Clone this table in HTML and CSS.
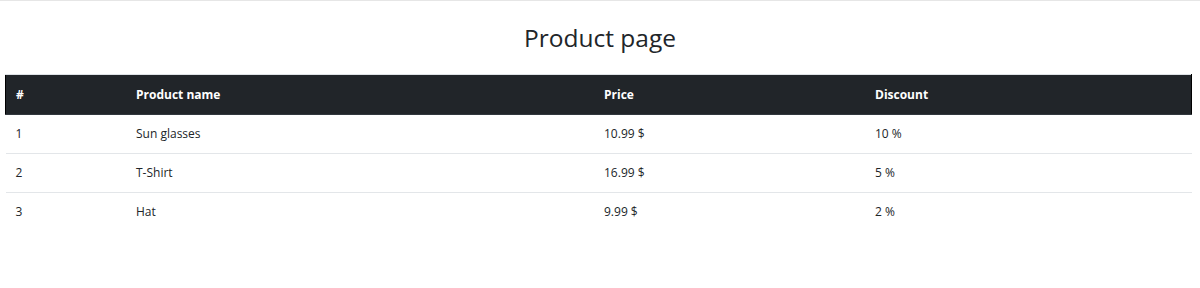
FILE: index.html
```html
<!DOCTYPE html>
<html lang="en">
  <head>
    <meta charset="UTF-8" />
    <title>Product page</title>
    <link rel="stylesheet" href="styles.css">
  </head>
  <body>
    <h1 class="title">Product page</h1>
    <table class="products">
      <thead>
        <tr>
          <th class="col-id">#</th>
          <th class="col-name">Product name</th>
          <th class="col-price">Price</th>
          <th>Discount</th>
        </tr>
      </thead>
      <tbody>
        <tr>
          <td>1</td>
          <td>Sun glasses</td>
          <td>10.99 $</td>
          <td>10 %</td>
        </tr>
        <tr>
          <td>2</td>
          <td>T-Shirt</td>
          <td>16.99 $</td>
          <td>5 %</td>
        </tr>
        <tr>
          <td>3</td>
          <td>Hat</td>
          <td>9.99 $</td>
          <td>2 %</td>
        </tr>
      </tbody>
    </table>
  </body>
</html>
```

FILE: styles.css
```css
html,
body {
  margin: 0;
  padding: 0;
  font-family: "Open Sans", "Noto Sans", sans-serif;
  color: #212529;
  background-color: #ffffff;
}
body {
  border-top: 1px solid #e6e6e6;
}
.title {
  font-size: 24.5px;
  font-weight: 400;
  line-height: 31px;
  text-align: center;
  margin: 21px 0 21px 0;
}
.products {
  width: calc(100% - 13px);
  margin-left: 5px;
  border-collapse: collapse;
  font-size: 12px;
}
.products th,
.products td {
  text-align: left;
  padding: 11px 10px 11px 10px;
  line-height: 16px;
}
.products thead th {
  background-color: #212529;
  color: #ffffff;
  font-weight: 700;
  padding: 12px 10px 11px 10px;
  border-top: 1px solid #dee2e6;
  border-bottom: 1px solid #32383e;
}
.products thead th:first-child {
  border-left: 1px solid #000;
}
.products thead th:last-child {
  border-right: 1px solid #000;
}
.products tbody td {
  border-top: 1px solid #e3e6e9;
}
.products tbody tr:first-child td {
  border-top: none;
}
.col-id {
  width: 100px;
}
.col-name {
  width: 448px;
}
.col-price {
  width: 251px;
}
```
